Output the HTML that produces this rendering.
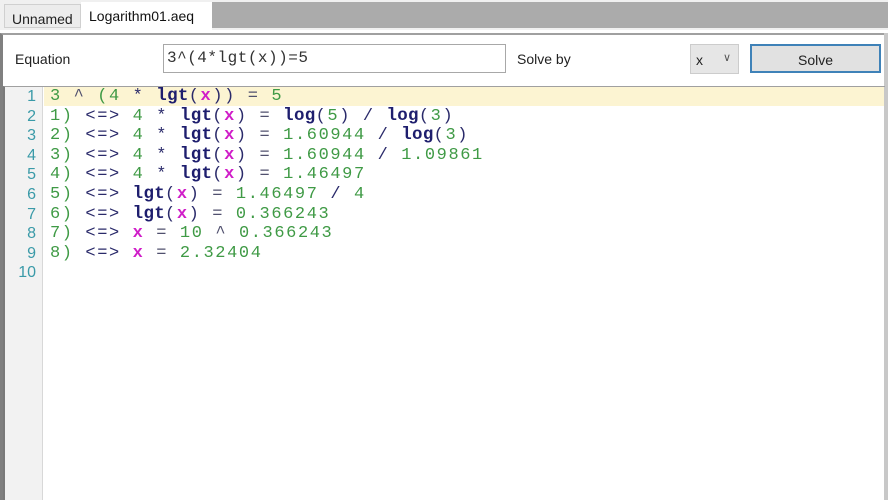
<!DOCTYPE html>
<html><head><meta charset="utf-8"><style>
*{margin:0;padding:0;box-sizing:border-box}
body{width:888px;height:500px;overflow:hidden;background:#fff;font-family:"Liberation Sans",sans-serif;position:relative}
.a{position:absolute}
.code{font-family:"Liberation Mono",monospace;font-size:17px;letter-spacing:1.6px;white-space:pre;font-weight:normal}
.g{color:#3f9a45}.n{color:#2a2a6a}.f{color:#1e1e6e;font-weight:bold;letter-spacing:0.3px;font-size:17.5px}.x{color:#d01ec8;font-weight:bold}.o{color:#50506e}
.ln{color:#3a9aa8;font-family:"Liberation Sans",sans-serif;font-size:16px;text-align:right;width:32px;left:4px}
</style></head><body>
<div class="a" style="left:0;top:0;width:888px;height:30px;background:#f0f0f0"></div>
<div class="a" style="left:212px;top:2px;width:676px;height:26px;background:#ababab"></div>
<div class="a" style="left:4px;top:4px;width:77px;height:24px;background:#ececec;border:1px solid #d0d0d0;font-size:14px;color:#222;padding:6px 0 0 7px">Unnamed</div>
<div class="a" style="left:81px;top:2px;width:131px;height:28px;background:#fff;font-size:14px;color:#111;padding:6px 0 0 8px">Logarithm01.aeq</div>
<div class="a" style="left:0;top:33px;width:888px;height:467px;background:#fff;border-top:2px solid #a0a0a0;border-left:3px solid #808080"></div>
<div class="a" style="left:884px;top:33px;width:4px;height:467px;background:#c8c8c8"></div>
<div class="a" style="left:15px;top:51px;font-size:14px;color:#222">Equation</div>
<div class="a code" style="left:163px;top:44px;width:343px;height:29px;border:1px solid #a8a8a8;padding:4px 0 0 3px;color:#333;font-size:16px;letter-spacing:0.5px">3^(4*lgt(x))=5</div>
<div class="a" style="left:517px;top:51px;font-size:14px;color:#222">Solve by</div>
<div class="a" style="left:690px;top:44px;width:49px;height:30px;background:#e6e6e6;border:1px solid #ccc;font-size:14px;color:#222;padding:7px 0 0 5px">x<span style="position:absolute;left:32px;top:6px;color:#555;font-size:11px">&#8744;</span></div>
<div class="a" style="left:750px;top:44px;width:131px;height:29px;background:#e1e1e1;border:2px solid #3f82b8;font-size:14px;color:#222;text-align:center;padding-top:6px">Solve</div>
<div class="a" style="left:3px;top:86px;width:882px;height:414px;border-top:1px solid #a0a0a0;border-left:2px solid #7a7a7a"></div>
<div class="a" style="left:5px;top:87px;width:38px;height:413px;background:#f2f2f2;border-right:1px solid #d8d8d8"></div>
<div class="a" style="left:44px;top:87px;width:840px;height:19px;background:#fcf4d2"></div>
<div class="a ln" style="top:87px;line-height:19.6px">1<br>2<br>3<br>4<br>5<br>6<br>7<br>8<br>9<br>10</div>
<div class="a code" style="left:50px;top:87px;line-height:19.6px"><span class="g">3</span> <span class="o">^</span> <span class="g">(4</span> <span class="n">*</span> <span class="f">lgt</span><span class="n">(</span><span class="x">x</span><span class="n">))</span> <span class="o">=</span> <span class="g">5</span>
<span class="g">1)</span> <span class="n">&lt;=&gt;</span> <span class="g">4</span> <span class="n">*</span> <span class="f">lgt</span><span class="n">(</span><span class="x">x</span><span class="n">)</span> <span class="o">=</span> <span class="f">log</span><span class="n">(</span><span class="g">5</span><span class="n">)</span> <span class="n">/</span> <span class="f">log</span><span class="n">(</span><span class="g">3</span><span class="n">)</span>
<span class="g">2)</span> <span class="n">&lt;=&gt;</span> <span class="g">4</span> <span class="n">*</span> <span class="f">lgt</span><span class="n">(</span><span class="x">x</span><span class="n">)</span> <span class="o">=</span> <span class="g">1.60944</span> <span class="n">/</span> <span class="f">log</span><span class="n">(</span><span class="g">3</span><span class="n">)</span>
<span class="g">3)</span> <span class="n">&lt;=&gt;</span> <span class="g">4</span> <span class="n">*</span> <span class="f">lgt</span><span class="n">(</span><span class="x">x</span><span class="n">)</span> <span class="o">=</span> <span class="g">1.60944</span> <span class="n">/</span> <span class="g">1.09861</span>
<span class="g">4)</span> <span class="n">&lt;=&gt;</span> <span class="g">4</span> <span class="n">*</span> <span class="f">lgt</span><span class="n">(</span><span class="x">x</span><span class="n">)</span> <span class="o">=</span> <span class="g">1.46497</span>
<span class="g">5)</span> <span class="n">&lt;=&gt;</span> <span class="f">lgt</span><span class="n">(</span><span class="x">x</span><span class="n">)</span> <span class="o">=</span> <span class="g">1.46497</span> <span class="n">/</span> <span class="g">4</span>
<span class="g">6)</span> <span class="n">&lt;=&gt;</span> <span class="f">lgt</span><span class="n">(</span><span class="x">x</span><span class="n">)</span> <span class="o">=</span> <span class="g">0.366243</span>
<span class="g">7)</span> <span class="n">&lt;=&gt;</span> <span class="x">x</span> <span class="o">=</span> <span class="g">10</span> <span class="o">^</span> <span class="g">0.366243</span>
<span class="g">8)</span> <span class="n">&lt;=&gt;</span> <span class="x">x</span> <span class="o">=</span> <span class="g">2.32404</span></div>
</body></html>
